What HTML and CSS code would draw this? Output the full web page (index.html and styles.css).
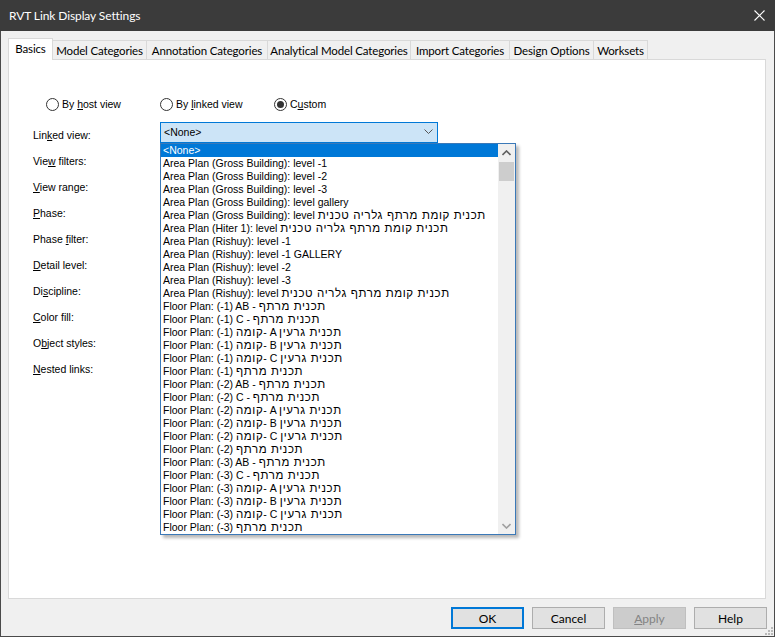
FILE: index.html
```html
<!DOCTYPE html>
<html>
<head>
<meta charset="utf-8">
<link rel="stylesheet" href="styles.css">
</head>
<body>
<div class="window">
  <div class="titlebar">
    <span class="title">RVT Link Display Settings</span>
    <svg class="close" width="11" height="11" viewBox="0 0 11 11"><path d="M0.5 0.5L10.5 10.5M10.5 0.5L0.5 10.5" stroke="#fff" stroke-width="1.1" fill="none"/></svg>
  </div>
  <div class="body">
    <div class="tabs">
      <div class="tab active t-basics">Basics</div>
      <div class="tab t-model">Model Categories</div>
      <div class="tab t-annot">Annotation Categories</div>
      <div class="tab t-analyt">Analytical Model Categories</div>
      <div class="tab t-import">Import Categories</div>
      <div class="tab t-design">Design Options</div>
      <div class="tab t-work">Worksets</div>
    </div>
    <div class="panel">
      <div class="radios">
        <div class="radio"><span class="circle"></span><span>By <u>h</u>ost view</span></div>
        <div class="radio"><span class="circle"></span><span>By <u>l</u>inked view</span></div>
        <div class="radio"><span class="circle on"></span><span>C<u>u</u>stom</span></div>
      </div>
      <div class="form">
        <span class="lbl">Lin<u>k</u>ed view:</span>
        <div class="combo"><span>&lt;None&gt;</span><svg width="9" height="6" viewBox="0 0 9 6"><path d="M0.5 0.5L4.5 4.5L8.5 0.5" stroke="#555" stroke-width="1" fill="none"/></svg></div>
        <span class="lbl">Vie<u>w</u> filters:</span><span></span>
        <span class="lbl"><u>V</u>iew range:</span><span></span>
        <span class="lbl"><u>P</u>hase:</span><span></span>
        <span class="lbl">Phase <u>f</u>ilter:</span><span></span>
        <span class="lbl"><u>D</u>etail level:</span><span></span>
        <span class="lbl">Di<u>s</u>cipline:</span><span></span>
        <span class="lbl"><u>C</u>olor fill:</span><span></span>
        <span class="lbl">O<u>b</u>ject styles:</span><span></span>
        <span class="lbl"><u>N</u>ested links:</span><span></span>
      </div>
      <div class="dropdown">
        <div class="items">
          <div class="item sel">&lt;None&gt;</div>
          <div class="item">Area Plan (Gross Building): level -1</div>
          <div class="item">Area Plan (Gross Building): level -2</div>
          <div class="item">Area Plan (Gross Building): level -3</div>
          <div class="item">Area Plan (Gross Building): level gallery</div>
          <div class="item">Area Plan (Gross Building): level <span class="he">תכנית קומת מרתף גלריה טכנית</span></div>
          <div class="item">Area Plan (Hiter 1): level <span class="he">תכנית קומת מרתף גלריה טכנית</span></div>
          <div class="item">Area Plan (Rishuy): level -1</div>
          <div class="item">Area Plan (Rishuy): level -1 GALLERY</div>
          <div class="item">Area Plan (Rishuy): level -2</div>
          <div class="item">Area Plan (Rishuy): level -3</div>
          <div class="item">Area Plan (Rishuy): level <span class="he">תכנית קומת מרתף גלריה טכנית</span></div>
          <div class="item">Floor Plan: (-1) AB - <span class="he">תכנית מרתף</span></div>
          <div class="item">Floor Plan: (-1) C - <span class="he">תכנית מרתף</span></div>
          <div class="item">Floor Plan: (-1) <span class="he">קומה</span>- A <span class="he">תכנית גרעין</span></div>
          <div class="item">Floor Plan: (-1) <span class="he">קומה</span>- B <span class="he">תכנית גרעין</span></div>
          <div class="item">Floor Plan: (-1) <span class="he">קומה</span>- C <span class="he">תכנית גרעין</span></div>
          <div class="item">Floor Plan: (-1) <span class="he">תכנית מרתף</span></div>
          <div class="item">Floor Plan: (-2) AB - <span class="he">תכנית מרתף</span></div>
          <div class="item">Floor Plan: (-2) C - <span class="he">תכנית מרתף</span></div>
          <div class="item">Floor Plan: (-2) <span class="he">קומה</span>- A <span class="he">תכנית גרעין</span></div>
          <div class="item">Floor Plan: (-2) <span class="he">קומה</span>- B <span class="he">תכנית גרעין</span></div>
          <div class="item">Floor Plan: (-2) <span class="he">קומה</span>- C <span class="he">תכנית גרעין</span></div>
          <div class="item">Floor Plan: (-2) <span class="he">תכנית מרתף</span></div>
          <div class="item">Floor Plan: (-3) AB - <span class="he">תכנית מרתף</span></div>
          <div class="item">Floor Plan: (-3) C - <span class="he">תכנית מרתף</span></div>
          <div class="item">Floor Plan: (-3) <span class="he">קומה</span>- A <span class="he">תכנית גרעין</span></div>
          <div class="item">Floor Plan: (-3) <span class="he">קומה</span>- B <span class="he">תכנית גרעין</span></div>
          <div class="item">Floor Plan: (-3) <span class="he">קומה</span>- C <span class="he">תכנית גרעין</span></div>
          <div class="item">Floor Plan: (-3) <span class="he">תכנית מרתף</span></div>
        </div>
        <div class="scrollbar">
          <div class="arrow"><svg width="9" height="6" viewBox="0 0 9 6"><path d="M0.5 5L4.5 1L8.5 5" stroke="#606060" stroke-width="1.6" fill="none"/></svg></div>
          <div class="track"><div class="thumb"></div></div>
          <div class="arrow"><svg width="9" height="6" viewBox="0 0 9 6"><path d="M0.5 1L4.5 5L8.5 1" stroke="#a0a0a0" stroke-width="1.6" fill="none"/></svg></div>
        </div>
      </div>
    </div>
  </div>
  <div class="footer">
    <button class="btn default">OK</button>
    <button class="btn">Cancel</button>
    <button class="btn disabled"><u>A</u>pply</button>
    <button class="btn">Help</button>
  </div>
  <svg class="grip" width="8" height="8" viewBox="0 0 8 8">
    <rect x="6" y="0" width="2" height="2" fill="#b8b8b8"/>
    <rect x="3" y="3" width="2" height="2" fill="#b8b8b8"/>
    <rect x="6" y="3" width="2" height="2" fill="#b8b8b8"/>
    <rect x="0" y="6" width="2" height="2" fill="#b8b8b8"/>
    <rect x="3" y="6" width="2" height="2" fill="#b8b8b8"/>
    <rect x="6" y="6" width="2" height="2" fill="#b8b8b8"/>
  </svg>
</div>
</body>
</html>
```
FILE: styles.css
```css
* { box-sizing: border-box; margin: 0; padding: 0; }
html, body { width: 775px; height: 637px; overflow: hidden; }
body {
  background: #f0f0f0;
  font-family: "Liberation Sans", "DejaVu Sans", sans-serif;
  font-size: 10.5px;
  color: #000;
}
.window {
  position: relative;
  width: 775px;
  height: 637px;
  display: flex;
  flex-direction: column;
  border: 1px solid #4a4a4a;
  border-top: 0;
  background: #f0f0f0;
}
.titlebar {
  height: 31px;
  flex: none;
  background: #3b3b3b;
  margin: 0 -1px;
  color: #fff;
  display: flex;
  align-items: center;
  justify-content: space-between;
  padding: 0 10px 0 9px;
  font-family: Lato, "Noto Sans", sans-serif;
  font-size: 12px;
  letter-spacing: -0.1px;
}
.close { display: block; }
.body {
  flex: 1;
  display: flex;
  flex-direction: column;
  padding: 7px 8px 0 7px;
  min-height: 0;
}
.tabs {
  display: flex;
  height: 21px;
  flex: none;
  align-items: flex-start;
  font-family: Lato, "Noto Sans", sans-serif;
  font-size: 11.5px;
  letter-spacing: -0.15px;
  position: relative;
  z-index: 2;
}
.tab {
  margin-top: 2px;
  height: 19px;
  border: 1px solid #d9d9d9;
  border-bottom: 0;
  background: #f0f0f0;
  margin-left: -1px;
  display: flex;
  align-items: center;
  justify-content: center;
  white-space: nowrap;
}
.tab.active {
  margin-top: 0;
  margin-left: 0;
  height: 22px;
  background: #fff;
  padding-bottom: 2px;
}
.t-basics { width: 45px; }
.t-model { width: 95px; }
.t-annot { width: 122px; }
.t-analyt { width: 144px; }
.t-import { width: 100px; }
.t-design { width: 85px; }
.t-work { width: 55px; }
.panel {
  flex: 1;
  position: relative;
  background: #fff;
  border: 1px solid #d9d9d9;
}
.radios {
  display: grid;
  grid-template-columns: repeat(3, 114px);
  padding: 36px 0 0 37px;
}
.radio {
  display: flex;
  align-items: center;
  gap: 3px;
  height: 16px;
}
.circle {
  width: 13px;
  height: 13px;
  border: 1px solid #333;
  border-radius: 50%;
  background: #fff;
  display: grid;
  place-items: center;
}
.circle.on::after {
  content: "";
  width: 7px;
  height: 7px;
  border-radius: 50%;
  background: #333;
}
.form {
  margin-top: 7px;
  padding-left: 24px;
  display: grid;
  grid-template-columns: 127px 278px;
  grid-auto-rows: 26px;
  align-items: center;
}
.lbl { padding-top: 5px; }
.combo {
  height: 21px;
  border: 1px solid #0078d7;
  background: #cce4f7;
  display: flex;
  align-items: center;
  justify-content: space-between;
  padding: 0 4px 0 3px;
}
.dropdown {
  position: absolute;
  left: 151px;
  top: 83px;
  width: 356px;
  height: 392px;
  border: 1px solid #3b79b8;
  background: #fff;
  display: flex;
  box-shadow: 3px 3px 3px rgba(0, 0, 0, 0.28);
  z-index: 3;
}
.items { flex: 1; }
.item {
  height: 13px;
  line-height: 13px;
  padding-left: 2px;
  white-space: nowrap;
}
.he { font-size: 11.5px; letter-spacing: 0.6px; }
.item.sel { background: #0078d7; color: #fff; }
.scrollbar {
  width: 17px;
  background: #f0f0f0;
  display: flex;
  flex-direction: column;
}
.arrow {
  height: 17px;
  display: grid;
  place-items: center;
}
.track { flex: 1; padding: 1px 1px 0 1px; }
.thumb { height: 19px; background: #cdcdcd; }
.footer {
  height: 37px;
  flex: none;
  display: flex;
  justify-content: flex-end;
  gap: 8px;
  padding: 8px 7px 7px 0;
}
.btn {
  width: 73px;
  height: 22px;
  border: 1px solid #adadad;
  background: #e1e1e1;
  font-family: Lato, "Noto Sans", sans-serif;
  font-size: 12px;
  color: #000;
}
.btn.default { border: 2px solid #0078d7; }
.btn.disabled { background: #cccccc; border-color: #bfbfbf; color: #838383; }
.grip { position: absolute; right: 1px; bottom: 1px; }
```
